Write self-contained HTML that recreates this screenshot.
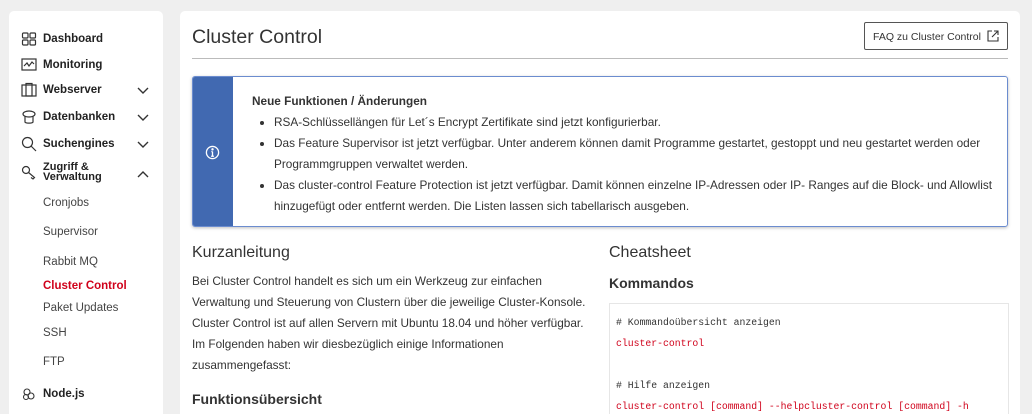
<!DOCTYPE html>
<html><head><meta charset="utf-8"><style>
*{box-sizing:border-box;margin:0;padding:0}
html,body{width:1032px;height:414px;overflow:hidden}
body{background:#efefef;font-family:"Liberation Sans",sans-serif;color:#333;position:relative}
.side{position:absolute;left:9px;top:11px;width:154px;height:403px;background:#fff;border-radius:5px 5px 0 0;overflow:hidden}
.nav{position:absolute;left:12px;font-size:11.5px;font-weight:bold;color:#222;display:flex;align-items:center}
.nav svg{width:16px;height:16px;margin-right:6px;flex:none}
.chev{position:absolute;left:128px;width:12px;height:8px}
.sub{position:absolute;left:34px;font-size:11.5px;color:#444}
.main{position:absolute;left:180px;top:11px;width:840px;height:403px;background:#fff;border-radius:5px 5px 0 0;overflow:hidden}
h1{position:absolute;left:12px;top:15px;font-size:19.5px;font-weight:normal;color:#333}
.btn{position:absolute;left:684px;top:11px;width:144px;height:28px;border:1px solid #555;border-radius:2px;font-size:10.5px;padding:8px 0 0 8px;color:#333}
.hr{position:absolute;left:12px;top:47px;width:816px;height:1px;background:#bbb}
.info{position:absolute;left:12px;top:65px;width:816px;height:151px;border:1px solid #6b8ccf;border-radius:3px;box-shadow:0 1px 3px rgba(0,0,0,.25);overflow:hidden}
.strip{position:absolute;left:0;top:0;width:40px;height:100%;background:#4169b1}
.itxt{position:absolute;left:59px;top:14px;width:750px;font-size:11.8px;line-height:21px;color:#333}
.itxt ul{margin-left:22px}
h2{position:absolute;font-size:16px;font-weight:normal;color:#333}
.p{position:absolute;left:12px;top:260px;width:405px;font-size:11.8px;line-height:21px;color:#333}
.code{position:absolute;left:429px;top:292px;width:400px;height:111px;border:1px solid #e6e6e6;border-bottom:none;overflow:hidden;font-family:"Liberation Mono",monospace;font-size:9.8px;padding:8px 6px 0;line-height:21px}
.code .r{color:#d0021b}
</style></head><body>
<div class="side">
<div class="nav" style="top:20px"><svg viewBox="0 0 16 16" fill="none" stroke="#333" stroke-width="1.2"><rect x="1.5" y="2" width="5.5" height="5" rx="1"/><rect x="9" y="2" width="5.5" height="5" rx="1"/><rect x="1.5" y="9" width="5.5" height="5" rx="1"/><rect x="9" y="9" width="5.5" height="5" rx="1"/></svg>Dashboard</div>
<div class="nav" style="top:46px"><svg viewBox="0 0 16 16" fill="none" stroke="#333" stroke-width="1.2"><rect x="1" y="2" width="14" height="11"/><path d="M3 9l3-3 2 3 3-4 2 2"/></svg>Monitoring</div>
<div class="nav" style="top:71px"><svg viewBox="0 0 16 16" fill="none" stroke="#333" stroke-width="1.2"><rect x="1" y="3" width="14" height="11"/><rect x="5" y="1.5" width="6" height="12.5"/></svg>Webserver</div>
<svg class="chev" style="top:76px" viewBox="0 0 12 8" fill="none" stroke="#333" stroke-width="1.4"><path d="M1 1l5 5 5-5"/></svg>
<div class="nav" style="top:98px"><svg viewBox="0 0 16 16" fill="none" stroke="#333" stroke-width="1.2"><ellipse cx="8" cy="5" rx="6" ry="3"/><path d="M4 7v6c0 1.5 8 1.5 8 0V7"/></svg>Datenbanken</div>
<svg class="chev" style="top:103px" viewBox="0 0 12 8" fill="none" stroke="#333" stroke-width="1.4"><path d="M1 1l5 5 5-5"/></svg>
<div class="nav" style="top:125px"><svg viewBox="0 0 16 16" fill="none" stroke="#333" stroke-width="1.2"><circle cx="6.5" cy="6.5" r="5"/><path d="M10 10l5 5"/></svg>Suchengines</div>
<svg class="chev" style="top:130px" viewBox="0 0 12 8" fill="none" stroke="#333" stroke-width="1.4"><path d="M1 1l5 5 5-5"/></svg>
<div class="nav" style="top:151px;line-height:10px;font-size:11px"><svg viewBox="0 0 16 16" fill="none" stroke="#333" stroke-width="1.2"><circle cx="5" cy="6" r="3.5"/><path d="M7.5 8.5l6 5-1.5 1.5-2-1.5"/></svg>Zugriff &amp;<br>Verwaltung</div>
<svg class="chev" style="top:159px" viewBox="0 0 12 8" fill="none" stroke="#333" stroke-width="1.4"><path d="M1 7l5-5 5 5"/></svg>
<div class="sub" style="top:186px">Cronjobs</div>
<div class="sub" style="top:215px">Supervisor</div>
<div class="sub" style="top:245px">Rabbit MQ</div>
<div class="sub" style="top:269px;color:#d0021b;font-weight:bold">Cluster Control</div>
<div class="sub" style="top:291px">Paket Updates</div>
<div class="sub" style="top:316px">SSH</div>
<div class="sub" style="top:345px">FTP</div>
<div class="nav" style="top:375px"><svg viewBox="0 0 16 16" fill="none" stroke="#333" stroke-width="1.1"><circle cx="6" cy="6" r="3"/><circle cx="10" cy="10" r="3"/><circle cx="5" cy="11" r="2.5"/></svg>Node.js</div>
</div>
<div class="main">
<h1>Cluster Control</h1>
<div class="btn">FAQ zu Cluster Control <svg style="position:absolute;right:8px;top:7px" width="12" height="12" viewBox="0 0 12 12" fill="none" stroke="#333" stroke-width="1.1"><path d="M5 1H1v10h10V7M7 1h4v4M11 1L5 7"/></svg></div>
<div class="hr"></div>
<div class="info"><div class="strip"><svg style="position:absolute;left:12px;top:68px" width="15" height="15" viewBox="0 0 16 16" fill="none" stroke="#fff" stroke-width="1.4"><circle cx="8" cy="8" r="6.5"/><path d="M8 7v5M6.5 12h3M6.8 7H8"/><circle cx="8" cy="4.6" r=".6" fill="#fff"/></svg></div>
<div class="itxt"><b>Neue Funktionen / Änderungen</b><ul>
<li>RSA-Schlüssellängen für Let´s Encrypt Zertifikate sind jetzt konfigurierbar.</li>
<li>Das Feature Supervisor ist jetzt verfügbar. Unter anderem können damit Programme gestartet, gestoppt und neu gestartet werden oder Programmgruppen verwaltet werden.</li>
<li>Das cluster-control Feature Protection ist jetzt verfügbar. Damit können einzelne IP-Adressen oder IP- Ranges auf die Block- und Allowlist hinzugefügt oder entfernt werden. Die Listen lassen sich tabellarisch ausgeben.</li></ul></div></div>
<h2 style="left:12px;top:233px">Kurzanleitung</h2>
<div class="p">Bei Cluster Control handelt es sich um ein Werkzeug zur einfachen Verwaltung und Steuerung von Clustern über die jeweilige Cluster-Konsole. Cluster Control ist auf allen Servern mit Ubuntu 18.04 und höher verfügbar. Im Folgenden haben wir diesbezüglich einige Informationen zusammengefasst:</div>
<div style="position:absolute;left:12px;top:380px;font-size:14px;font-weight:bold">Funktionsübersicht</div>
<h2 style="left:429px;top:233px">Cheatsheet</h2>
<div style="position:absolute;left:429px;top:264px;font-size:14px;font-weight:bold">Kommandos</div>
<div class="code"># Kommandoübersicht anzeigen<br><span class="r">cluster-control</span><br><br># Hilfe anzeigen<br><span class="r">cluster-control [command] --helpcluster-control [command] -h</span></div>
</div>
</body></html>
